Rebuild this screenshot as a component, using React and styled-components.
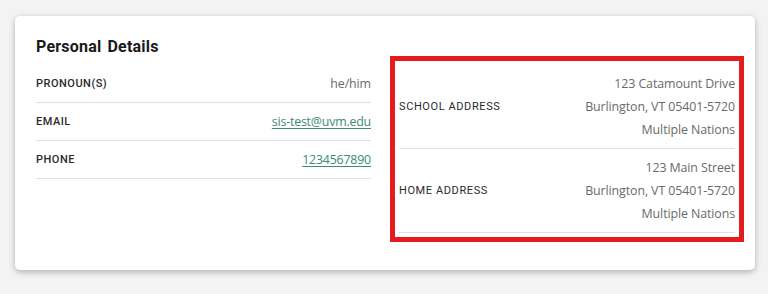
import React from "react";
import styled, { createGlobalStyle } from "styled-components";

const Global = createGlobalStyle`
  html, body { margin: 0; padding: 0; background: #f3f3f3; }
  body { font-family: "Open Sans", sans-serif; }
`;

const Page = styled.div`
  padding: 16px 13px 24px 15px;
`;

const Card = styled.section`
  width: 740px;
  height: 254px;
  box-sizing: border-box;
  background: #ffffff;
  border-radius: 5px;
  box-shadow: 0 2px 6px rgba(0, 0, 0, 0.28);
  padding: 20px 20px 20px 21px;
`;

const Title = styled.h2`
  margin: 1px 0 8px 0;
  font-family: Roboto, sans-serif;
  font-weight: 700;
  font-size: 16px;
  line-height: 20px;
  color: #1a1a1a;
  word-spacing: 2px;
  letter-spacing: 0.2px;
`;

const Columns = styled.div`
  display: grid;
  grid-template-columns: 335px 336px;
  column-gap: 28px;
  align-items: start;
`;

const List = styled.div`
  display: flex;
  flex-direction: column;
`;

const Highlight = styled(List)`
  outline: 5px solid #e41b1f;
  outline-offset: 4px;
`;

const Row = styled.div`
  display: flex;
  justify-content: space-between;
  align-items: center;
  border-bottom: 1px solid #e0e0e0;
  padding: 7px 0;
`;

const Label = styled.span`
  font-family: Roboto, sans-serif;
  font-weight: ${(p) => (p.$strong ? 500 : 400)};
  font-size: 11px;
  letter-spacing: ${(p) => (p.$strong ? "0.5px" : "0.6px")};
  text-transform: uppercase;
  color: #2b2b2b;
`;

const Value = styled.div`
  text-align: right;
  font-family: "Open Sans", sans-serif;
  font-size: 12.4px;
  line-height: 23px;
  color: #6a6a6a;
  letter-spacing: -0.1px;
`;

const Link = styled.a`
  color: #3a8c6c;
  text-decoration: underline;
  text-underline-offset: 2px;
  text-decoration-thickness: 1px;
  letter-spacing: -0.2px;
`;

const leftRows = [
  { label: "Pronoun(s)", value: "he/him" },
  { label: "Email", value: "sis-test@uvm.edu", href: "mailto:sis-test@uvm.edu" },
  { label: "Phone", value: "1234567890", href: "tel:1234567890" },
];

const addresses = [
  { label: "School Address", lines: ["123 Catamount Drive", "Burlington, VT 05401-5720", "Multiple Nations"] },
  { label: "Home Address", lines: ["123 Main Street", "Burlington, VT 05401-5720", "Multiple Nations"] },
];

export default function App() {
  return (
    <>
      <Global />
      <Page>
        <Card>
          <Title>Personal Details</Title>
          <Columns>
            <List>
              {leftRows.map((r) => (
                <Row key={r.label}>
                  <Label $strong>{r.label}</Label>
                  <Value>{r.href ? <Link href={r.href}>{r.value}</Link> : r.value}</Value>
                </Row>
              ))}
            </List>
            <Highlight>
              {addresses.map((a) => (
                <Row key={a.label}>
                  <Label>{a.label}</Label>
                  <Value>
                    {a.lines.map((l) => (
                      <div key={l}>{l}</div>
                    ))}
                  </Value>
                </Row>
              ))}
            </Highlight>
          </Columns>
        </Card>
      </Page>
    </>
  );
}
